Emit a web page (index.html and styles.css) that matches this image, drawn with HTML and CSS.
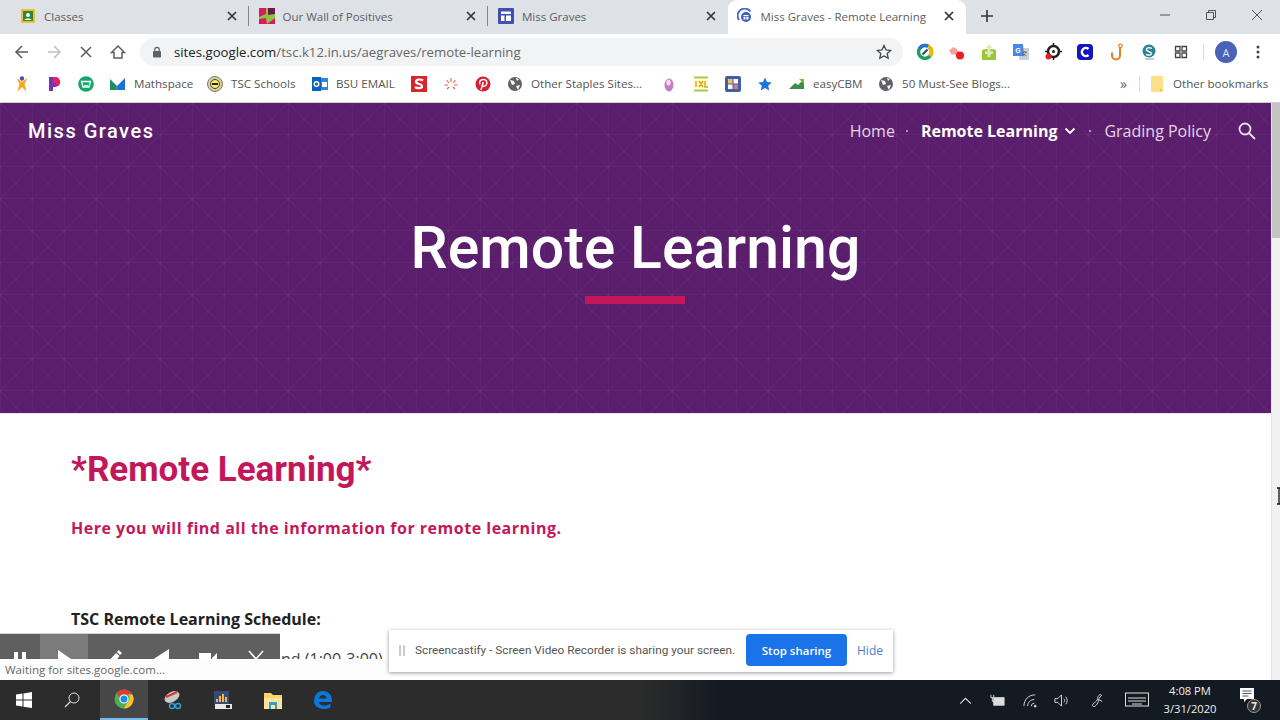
FILE: index.html
```html
<!DOCTYPE html>
<html lang="en">
<head>
    <meta charset="UTF-8">
    <title>Miss Graves - Remote Learning</title>
    <link rel="stylesheet" href="styles.css">
</head>
<body>
    <!-- tab strip -->
    <div class="tabstrip">
        <div class="tab">
            <svg class="favicon" viewBox="0 0 16 16"><rect x="1" y="1" width="14" height="14" rx="1" fill="#f9bb2d"/><rect x="3" y="3" width="10" height="10" fill="#1e8e3e"/><circle cx="8" cy="7" r="2" fill="#fff"/><path d="M4.500 12c.5-2 6.500-2 7 0z" fill="#fff"/></svg>
            <span class="tab-title">Classes</span>
            <svg class="tab-close" viewBox="0 0 10 10"><path d="M1 1l8 8M9 1l-8 8"/></svg>
        </div>
        <div class="tab sep">
            <svg class="favicon" viewBox="0 0 16 16"><rect width="16" height="16" fill="#8cc63f"/><path d="M0 0h7v6l-7 3zM8 16l8-6v6zM0 11l7-1 1 6H0z" fill="#d81b60"/><path d="M9 0h7v6l-7 1z" fill="#6a1b4d"/></svg>
            <span class="tab-title">Our Wall of Positives</span>
            <svg class="tab-close" viewBox="0 0 10 10"><path d="M1 1l8 8M9 1l-8 8"/></svg>
        </div>
        <div class="tab sep">
            <svg class="favicon" viewBox="0 0 16 16"><rect width="16" height="16" rx="1" fill="#3f51b5"/><path d="M3 3.500h10v2.500H3zM3 7.500h3.500V13H3zM8 7.500h5V13H8z" fill="#fff"/></svg>
            <span class="tab-title">Miss Graves</span>
            <svg class="tab-close" viewBox="0 0 10 10"><path d="M1 1l8 8M9 1l-8 8"/></svg>
        </div>
        <div class="tab active">
            <svg class="favicon" viewBox="0 0 16 16"><path d="M13.500 3.500A7 7 0 0 0 2 12" fill="none" stroke="#4a6fc4" stroke-width="2"/><circle cx="9" cy="9" r="5" fill="#3f5fb5"/><path d="M6.500 7h5v1.200h-5zM6.500 9h2v2.500h-2zM9.300 9h2.200v2.500H9.300z" fill="#fff"/></svg>
            <span class="tab-title">Miss Graves - Remote Learning</span>
            <svg class="tab-close" viewBox="0 0 10 10"><path d="M1 1l8 8M9 1l-8 8"/></svg>
        </div>
        <svg class="new-tab" viewBox="0 0 12 12"><path d="M6 0v12M0 6h12"/></svg>
        <div class="window-controls">
            <svg viewBox="0 0 12 12"><path d="M1 6h10"/></svg>
            <svg viewBox="0 0 12 12"><path d="M1.500 3.500h7v7h-7zM3.500 3.500v-2h7v7h-2"/></svg>
            <svg viewBox="0 0 12 12"><path d="M1 1l10 10M11 1L1 11"/></svg>
        </div>
    </div>

    <!-- address bar -->
    <div class="toolbar">
        <div class="nav-buttons">
            <svg viewBox="0 0 16 16"><path d="M14 8H2.500M8 2L2 8l6 6"/></svg>
            <svg class="disabled" viewBox="0 0 16 16"><path d="M2 8h11.500M8 2l6 6-6 6"/></svg>
            <svg viewBox="0 0 16 16"><path d="M3 3l10 10M13 3L3 13"/></svg>
            <svg viewBox="0 0 16 16"><path d="M8 2L1.500 8.500H4V14h8V8.500h2.500z"/></svg>
        </div>
        <div class="omnibox">
            <svg class="lock" viewBox="0 0 10 12"><rect x="1" y="5" width="8" height="6.500" rx="1" fill="#5f6368"/><path d="M2.800 5V3.500a2.200 2.200 0 0 1 4.400 0V5" fill="none" stroke="#5f6368" stroke-width="1.200"/></svg>
            <span class="url"><b>sites.google.com</b>/tsc.k12.in.us/aegraves/remote-learning</span>
            <svg class="star" viewBox="0 0 16 16"><path d="M8 1.500l2 4.400 4.700.5-3.500 3.200 1 4.700L8 11.900l-4.200 2.400 1-4.700L1.300 6.400 6 5.900z"/></svg>
        </div>
        <div class="extensions">
            <svg viewBox="0 0 18 18"><circle cx="9" cy="9" r="6.500" fill="#fff" stroke="#1aa260" stroke-width="3.500"/><path d="M3.400 5.700A6.500 6.500 0 0 1 12 3.200" fill="none" stroke="#2a6fd6" stroke-width="3.500"/><path d="M12 3.200A6.500 6.500 0 0 1 14 13.200" fill="none" stroke="#f4b400" stroke-width="3.500"/><path d="M6.500 11.500L11.500 6.500" stroke="#174a7c" stroke-width="2"/></svg>
            <svg viewBox="0 0 18 18"><path d="M1 7.500L5.500 4l2.500 1.500 3 3-3 3.500-3-1-1 1z" fill="#f4a0a0"/><circle cx="12" cy="12.500" r="4" fill="#ea1c24"/></svg>
            <svg viewBox="0 0 18 18"><path d="M2 7l4-1h6l4 1v10H2z" fill="#9bc53d"/><path d="M9 1l3.500 4H10.500v3.500H13V11H10.500v3h-3v-3H5V8.500h2.500V5H5.500z" fill="#dcedb5"/></svg>
            <svg viewBox="0 0 18 18"><rect x="7" y="5" width="10" height="12" fill="#c9d1d6"/><path d="M1 1h10l1 12H1z" fill="#4a86e8"/><text class="ext-g" x="3.200" y="9.500">G</text><path d="M10 9h5M12.500 8v1M14 9c-.5 2-2 3.500-3.500 4M11 10c.5 1.500 2 2.500 3.500 3" fill="none" stroke="#666" stroke-width=".8"/></svg>
            <svg viewBox="0 0 18 18"><circle cx="9.500" cy="8.500" r="5.500" fill="#fff" stroke="#222" stroke-width="2.600"/><circle cx="9.500" cy="8.500" r="1.500" fill="#222"/><path d="M9.500 0v3M9.500 14v3M1 8.500h3M15 8.500h3" stroke="#222" stroke-width="1.600"/><circle cx="4.500" cy="13.500" r="3" fill="#e02020"/></svg>
            <svg viewBox="0 0 18 18"><rect x="1" y="1" width="16" height="16" rx="4" fill="#1515c0"/><path d="M12.500 6a4 4 0 1 0 0 6" fill="none" stroke="#fff" stroke-width="2.400"/></svg>
            <svg viewBox="0 0 18 18"><path d="M12 5v7.500a4 4 0 0 1-8 0V9.500" fill="none" stroke="#e67e22" stroke-width="2"/><circle cx="12.500" cy="2.800" r="1.800" fill="none" stroke="#e67e22" stroke-width="1.200"/></svg>
            <svg viewBox="0 0 18 18"><circle cx="9" cy="8" r="6.500" fill="#2f7f96"/><path d="M12 5.500C10 4 6 4.500 6.500 7c.5 2 5 1.500 5 3.500 0 2-3.500 2-5.500.8" fill="none" stroke="#e4f2f5" stroke-width="1.500"/><path d="M5 16h9" stroke="#9ab" stroke-width="1.200"/></svg>
            <svg viewBox="0 0 18 18"><path d="M3.500 3.500h4.500v4.500H3.500zM10 3.500h4.500v4.500H10zM3.500 10h4.500v4.500H3.500zM10 10h4.500v4.500H10z" fill="none" stroke="#444" stroke-width="1.300"/></svg>
        </div>
        <span class="toolbar-divider"></span>
        <span class="avatar">A</span>
        <svg class="menu-dots" viewBox="0 0 4 16"><circle cx="2" cy="3" r="1.500"/><circle cx="2" cy="8" r="1.500"/><circle cx="2" cy="13" r="1.500"/></svg>
    </div>

    <!-- bookmarks -->
    <div class="bookmarks">
        <svg class="bm" viewBox="0 0 16 16"><circle cx="8" cy="2.500" r="2.200" fill="#3b5a9c"/><path d="M2.500 2L8 6l5.500-4-3 6 2 7.500L8 11l-4.500 4.500 2-7.500z" fill="#f5a623"/></svg>
        <svg class="bm" viewBox="0 0 16 16"><path d="M3 1h6a5 5 0 0 1 0 10H7v4H3z" fill="#7b2fb5"/><path d="M7 1h2a5 5 0 0 1 3 9L7 6z" fill="#e91e63"/></svg>
        <svg class="bm" viewBox="0 0 16 16"><circle cx="8" cy="8" r="7.800" fill="#12a86b"/><path d="M3.500 5.500h9l-1.500 5.500H5z" fill="none" stroke="#fff" stroke-width="1.300"/><path d="M6 9c1 1 3 1 4 0" fill="none" stroke="#fff"/></svg>
        <span class="bm-item bm-mathspace"><svg class="bm" viewBox="0 0 16 16"><path d="M0 14V3l7 7-1 4z" fill="#1f8f5a"/><path d="M6 14l1-4 8-8v12z" fill="#1e6fd9"/></svg>Mathspace</span>
        <span class="bm-item bm-tsc"><svg class="bm" viewBox="0 0 16 16"><circle cx="8" cy="8" r="7.500" fill="#d8d48a" stroke="#777"/><circle cx="8" cy="8" r="4.500" fill="#f6ee6a" stroke="#444"/><path d="M5 8h6" stroke="#222" stroke-width="2"/></svg>TSC Schools</span>
        <span class="bm-item bm-bsu"><svg class="bm" viewBox="0 0 16 16"><rect x="6" y="2" width="10" height="12" fill="#2f86d8"/><rect y="1" width="9" height="14" fill="#0b62b8"/><circle cx="4.500" cy="8" r="2.300" fill="none" stroke="#fff" stroke-width="1.400"/><path d="M10 6h5v5h-5z" fill="#fff"/></svg>BSU EMAIL</span>
        <svg class="bm" viewBox="0 0 16 16"><rect width="16" height="16" fill="#d9242b"/><path d="M12 4.500C10 3 5 3 5 5.800c0 2.700 6 1.700 6 4.400 0 2.500-5 2.300-7 .8" fill="none" stroke="#fff" stroke-width="2.200"/></svg>
        <svg class="bm" viewBox="0 0 16 16"><path d="M8 6V2M6 7L3.500 4M10 7l2.500-3M5 9H1.500M11 9h3.500M6 11l-2 2M10 11l2 2" stroke="#e8604c" stroke-width="1.100"/></svg>
        <svg class="bm" viewBox="0 0 16 16"><circle cx="8" cy="8" r="7.500" fill="#d81e34"/><path d="M6 14l2.300-8M5 8.500C3.500 5 6 3.500 8.500 3.500c3 0 4 2.500 3 5-1 2.300-3.500 2.300-4 .7" fill="none" stroke="#fff" stroke-width="1.500"/></svg>
        <span class="bm-item bm-staples"><svg class="bm" viewBox="0 0 16 16"><circle cx="8" cy="8" r="7" fill="#5f6368"/><path d="M3 4l4 1 1 3-3 1zM9 10l4-1-2 5zM9 2l3 1-2 2z" fill="#fff"/></svg>Other Staples Sites...</span>
        <svg class="bm" viewBox="0 0 16 16"><ellipse cx="8" cy="9" rx="4.500" ry="6.500" fill="#c77bc4"/><ellipse cx="7.500" cy="6.500" rx="2.200" ry="3" fill="#f6dcf3"/></svg>
        <svg class="bm" viewBox="0 0 16 16"><path d="M1 1.500h14M1 14.500h14" stroke="#a6ce39" stroke-width="2"/><rect x="1" y="4" width="14" height="8" fill="#fff8d8"/><path d="M3 5v6M6 5l4 6M10 5l-4 6M12 5v6h3" fill="none" stroke="#e0a800" stroke-width="1.400"/></svg>
        <svg class="bm" viewBox="0 0 16 16"><rect width="16" height="16" rx="2" fill="#3f5fa8"/><rect x="3" y="3" width="4.500" height="4.500" fill="#f2c14e"/><rect x="8.500" y="3" width="4.500" height="4.500" fill="#fff"/><rect x="3" y="8.500" width="4.500" height="4.500" fill="#fff"/><rect x="8.500" y="8.500" width="4.500" height="4.500" fill="#e57373"/></svg>
        <svg class="bm" viewBox="0 0 16 16"><path d="M8 1.500l2 4.500 4.800.5-3.600 3.200 1 4.800L8 12l-4.200 2.500 1-4.800L1.200 6.500 6 6z" fill="#1a73e8"/></svg>
        <span class="bm-item bm-easy"><svg class="bm" viewBox="0 0 16 16"><path d="M0 13l6-6 3 2 6-6v10z" fill="#3c8f4a"/><path d="M10 3h5v5z" fill="#7cb342"/></svg>easyCBM</span>
        <span class="bm-item bm-blogs"><svg class="bm" viewBox="0 0 16 16"><circle cx="8" cy="8" r="7" fill="#5f6368"/><path d="M3 4l4 1 1 3-3 1zM9 10l4-1-2 5zM9 2l3 1-2 2z" fill="#fff"/></svg>50 Must-See Blogs...</span>
        <span class="bm-more">»</span>
        <span class="bm-divider"></span>
        <span class="bm-item"><svg class="bm" viewBox="0 0 16 16"><path d="M2 0h12v16H2z" fill="#fbe08a"/><path d="M11 16v-3h3z" fill="#e8c45e"/></svg>Other bookmarks</span>
    </div>

    <!-- site -->
    <div class="viewport">
        <div class="page">
            <header class="hero">
                <div class="site-nav">
                    <span class="site-name">Miss Graves</span>
                    <nav class="site-links">
                        <a>Home</a>
                        <i class="dot"></i>
                        <a class="current">Remote Learning</a>
                        <svg class="chevron" viewBox="0 0 12 8"><path d="M1.500 1.500L6 6l4.500-4.500"/></svg>
                        <i class="dot"></i>
                        <a>Grading Policy</a>
                    </nav>
                    <svg class="site-search" viewBox="0 0 18 18"><circle cx="7" cy="7" r="5.500"/><path d="M11 11l6 6"/></svg>
                </div>
                <h1>Remote Learning</h1>
                <div class="title-rule"></div>
            </header>
            <main class="content">
                <h2>*Remote Learning*</h2>
                <p class="lead">Here you will find all the information for remote learning.</p>
                <p class="schedule-title">TSC Remote Learning Schedule:</p>
                <p class="schedule-row">nd (1:00-3:00)</p>
            </main>
        </div>
        <div class="scrollbar"><div class="thumb"></div></div>

        <!-- things floating over the page -->
        <div class="recorder">
            <span class="rec-btn"><svg viewBox="0 0 20 20"><path d="M4 3h4v14H4zM12 3h4v14h-4z"/></svg></span>
            <span class="rec-btn on"><svg viewBox="0 0 20 20"><path d="M4 1l13 9-13 9z"/></svg></span>
            <span class="rec-btn"><svg viewBox="0 0 20 20"><path d="M5 14L14 4l3.500 3L9 18zM15 3l1.500-2 3.500 3-2 2z"/></svg></span>
            <span class="rec-btn"><svg viewBox="0 0 20 20"><path d="M-4 15L19 0v20H-4z"/></svg></span>
            <span class="rec-btn"><svg viewBox="0 0 20 20"><path d="M1 4h12v14H1zM14 9l5-5v14l-5-4z"/></svg></span>
            <span class="rec-btn"><svg class="rec-x" viewBox="0 0 20 20"><path d="M3 2l14 16M17 2L3 18"/></svg></span>
        </div>
        <div class="status-bubble">Waiting for sites.google.com...</div>
        <div class="share-bar">
            <span class="grip"></span>
            <span class="share-text">Screencastify - Screen Video Recorder is sharing your screen.</span>
            <button class="stop-btn">Stop sharing</button>
            <span class="hide-link">Hide</span>
        </div>
        <svg class="cursor" viewBox="0 0 6 18"><path d="M1 1h4M3 1v16M1 17h4"/></svg>
    </div>

    <!-- windows taskbar -->
    <footer class="taskbar">
        <span class="task"><svg viewBox="0 0 16 16"><path d="M0 2.500l6.500-.9v6H0zM7.500 1.400L16 0v7.600H7.500zM0 8.500h6.500v6L0 13.600zM7.500 8.500H16V16l-8.500-1.300z" fill="#fff"/></svg></span>
        <span class="task"><svg viewBox="0 0 16 16"><circle cx="10" cy="6" r="5" fill="none" stroke="#ddd"/><path d="M6.500 9.500L1 15" stroke="#ddd" stroke-width="1.300"/></svg></span>
        <span class="task running"><svg class="large" viewBox="0 0 20 20"><circle cx="10" cy="10" r="9.500" fill="#4caf50"/><path d="M10 .5a9.500 9.500 0 0 1 8.200 4.700H10a5 5 0 0 0-4.600 3L2.600 4A9.500 9.500 0 0 1 10 .5z" fill="#e53935"/><path d="M18.400 5.500a9.500 9.500 0 0 1-8.700 14l4.500-7a5 5 0 0 0 0-7z" fill="#fbc02d"/><circle cx="10" cy="10" r="4.600" fill="#fff"/><circle cx="10" cy="10" r="3.500" fill="#1e88e5"/></svg></span>
        <span class="task"><svg class="large" viewBox="0 0 20 20"><ellipse cx="9" cy="7" rx="8" ry="5" fill="#c9c9c9" transform="rotate(-30 9 7)"/><path d="M3 7l11-5" stroke="#d9342b" stroke-width="2"/><circle cx="9" cy="16" r="2.500" fill="none" stroke="#2b9fd6" stroke-width="1.500"/><circle cx="15" cy="16" r="2.500" fill="none" stroke="#2b9fd6" stroke-width="1.500"/></svg></span>
        <span class="task"><svg class="large" viewBox="0 0 20 20"><rect x="1" y="1" width="15" height="13" fill="#3a4a78"/><path d="M3 12V9h2v3zM6 12V6h2v6zM9 12V4h2v8zM12 12V7h2v5z" fill="#f4b942"/><rect x="2" y="14" width="17" height="5" fill="#e8e8e8"/><rect x="13" y="15" width="4" height="3" fill="#222"/></svg></span>
        <span class="task"><svg class="large" viewBox="0 0 20 20"><path d="M1 3h7l2 2h9v14H1z" fill="#f8d66d"/><path d="M1 8h18v11H1z" fill="#fce59a"/><path d="M6 12h8v7h-2v-4H8v4H6z" fill="#2a9fd6"/></svg></span>
        <span class="task"><svg class="large" viewBox="0 0 20 20"><path d="M10 1C4 1 1 6 1 11c0 6 6 8 10 8 2 0 5-.6 6.500-1.500v-4C15 15 13 15.500 11 15.500c-3 0-5-1.500-5-3.500h13c.6-6-3-11-9-11zM6 8.500C6.500 6.500 8 5 10 5s3.500 1.500 3.500 3.500z" fill="#0b78d7"/></svg></span>
        <div class="tray">
            <svg class="tray-icon" viewBox="0 0 14 14"><path d="M2 10l5-5 5 5"/></svg>
            <svg class="tray-icon tray-power" viewBox="0 0 16 14"><rect x="4" y="4" width="11" height="8" fill="#ddd"/><path d="M1 1v3h3V1M2.500 4v4H5"/></svg>
            <svg class="tray-icon tray-wifi" viewBox="0 0 16 16"><path d="M1 14C1 7 6 2 13 2M5 14c0-4 3-7 7-7M9 14c0-2 1-3 3-3"/><circle cx="13" cy="14" r="1" fill="#ddd"/></svg>
            <svg class="tray-icon tray-sound" viewBox="0 0 16 16"><path d="M1 6h3l4-4v12l-4-4H1zM10.500 6c1 1 1 3 0 4M12.500 4c2 2 2 6 0 8"/></svg>
            <svg class="tray-icon tray-pen" viewBox="0 0 16 16"><path d="M3 14c-2-3 5-4 5-8 0-3 3-5 4-4 1 1-3 3-3 6 0 3-4 8-6 6zM9 7l4 2"/></svg>
            <svg class="tray-icon tray-kbd" viewBox="0 0 24 16"><rect x=".5" y="1" width="23" height="13"/><path d="M3 6h18M3 9h18M7 12h10"/></svg>
            <div class="clock"><span>4:08 PM</span><span>3/31/2020</span></div>
            <div class="notif">
                <svg viewBox="0 0 16 16"><path d="M1 1h14v11H8l-3 3v-3H1z" fill="#fff"/><path d="M3.500 4h9M3.500 6.500h9M3.500 9h6" stroke="#555"/></svg>
                <span class="notif-count">7</span>
            </div>
        </div>
    </footer>
</body>
</html>
```

FILE: styles.css
```css
* {
    margin: 0;
    padding: 0;
    box-sizing: border-box;
}

body {
    width: 1280px;
    height: 720px;
    overflow: hidden;
    display: flex;
    flex-direction: column;
    background: #fff;
    font-family: "Open Sans", sans-serif;
    color: #333;
}

svg {
    display: block;
    flex-shrink: 0;
}

/* Tab strip */
.tabstrip {
    height: 34px;
    background: #dee1e6;
    display: flex;
    align-items: stretch;
    padding-left: 8px;
}

.tab {
    width: 239.500px;
    display: flex;
    align-items: center;
    padding: 0 11px 2px 12px;
    position: relative;
}

.tab.sep {
    padding-left: 11px;
}

.tab.sep::before {
    content: "";
    position: absolute;
    left: 0;
    top: 6px;
    bottom: 8px;
    width: 1px;
    background: #84878c;
}

.tab.active {
    background: #fff;
    border-radius: 9px 9px 0 0;
    margin-left: 1px;
    width: 238px;
    padding-left: 9px;
    padding-right: 12px;
}

.favicon {
    width: 16px;
    height: 16px;
    margin-right: 8px;
}

.tab-title {
    flex: 1;
    font-size: 11.500px;
    color: #5b5e63;
    white-space: nowrap;
    overflow: hidden;
}

.tab-close {
    width: 10px;
    height: 10px;
    fill: none;
    stroke: #333;
    stroke-width: 1.700;
}

.new-tab {
    width: 12px;
    height: 12px;
    margin: 10px 0 0 15px;
    fill: none;
    stroke: #333;
    stroke-width: 1.600;
}

.window-controls {
    margin-left: auto;
    display: flex;
}

.window-controls svg {
    width: 46px;
    height: 12px;
    margin-top: 9px;
    fill: none;
    stroke: #444;
    stroke-width: 0.900;
}

/* Address bar */
.toolbar {
    height: 34px;
    padding-top: 2px;
    display: flex;
    align-items: center;
    background: #fff;
}

.nav-buttons {
    display: flex;
    gap: 16px;
    padding-left: 14px;
    width: 140px;
}

.nav-buttons svg {
    width: 16px;
    height: 16px;
    fill: none;
    stroke: #5a5d61;
    stroke-width: 1.500;
}

.nav-buttons .disabled {
    stroke: #bdc1c6;
}

.omnibox {
    width: 763px;
    height: 28px;
    background: #f1f3f4;
    border-radius: 14px;
    display: flex;
    align-items: center;
    padding: 0 11px 0 12px;
}

.lock {
    width: 10px;
    height: 12px;
    margin-right: 12px;
}

.url {
    flex: 1;
    font-size: 13.200px;
    color: #666;
    white-space: nowrap;
}

.url b {
    font-weight: 400;
    color: #222;
}

.star {
    width: 16px;
    height: 16px;
    fill: none;
    stroke: #444;
    stroke-width: 1.300;
}

.extensions {
    display: flex;
    gap: 14px;
    padding-left: 13px;
}

.extensions svg {
    width: 18px;
    height: 18px;
}

.ext-g {
    font-family: "Liberation Sans", sans-serif;
    font-size: 7px;
    font-weight: 700;
    fill: #fff;
}

.toolbar-divider {
    width: 1px;
    height: 16px;
    background: #dadce0;
    margin-left: 13px;
}

.avatar {
    width: 22px;
    height: 22px;
    margin-left: 11px;
    border-radius: 50%;
    background: #4a62b8;
    color: #dfe5f7;
    font-size: 11px;
    display: flex;
    align-items: center;
    justify-content: center;
}

.menu-dots {
    width: 4px;
    height: 16px;
    margin-left: 19px;
    fill: #444;
}

/* Bookmarks */
.bookmarks {
    height: 35px;
    display: flex;
    align-items: center;
    padding: 0 0 3px 14px;
    background: #fff;
    border-bottom: 1px solid #d3cfd6;
    font-size: 11.600px;
    color: #555;
    white-space: nowrap;
}

.bm {
    width: 16px;
    height: 16px;
    margin-right: 16px;
}

.bm-item {
    display: flex;
    align-items: center;
}

.bm-item .bm {
    margin-right: 8px;
}

.bm-mathspace {
    width: 97px;
}

.bm-tsc {
    width: 105px;
}

.bm-bsu {
    width: 99px;
}

.bm-staples {
    width: 154px;
}

.bm-easy {
    width: 89px;
}

.bm-blogs {
    width: 242px;
}

.bm-more {
    width: 19px;
    font-size: 14px;
    color: #666;
}

.bm-divider {
    width: 1px;
    height: 16px;
    background: #e0e0e0;
    margin-right: 9px;
}

/* Site */
.viewport {
    flex: 1;
    min-height: 0;
    display: flex;
    position: relative;
    overflow: hidden;
}

.page {
    width: 1271px;
    overflow: hidden;
}

.hero {
    height: 310px;
    background-color: #5b1e6d;
    background-image:
        linear-gradient(45deg, transparent 49%, rgba(255, 255, 255, 0.03) 49% 51%, transparent 51%),
        linear-gradient(-45deg, transparent 49%, rgba(255, 255, 255, 0.03) 49% 51%, transparent 51%),
        linear-gradient(90deg, rgba(255, 255, 255, 0.03) 1px, transparent 1px),
        linear-gradient(0deg, rgba(255, 255, 255, 0.03) 1px, transparent 1px),
        linear-gradient(45deg, transparent 49.500%, rgba(255, 255, 255, 0.025) 49.500% 50.500%, transparent 50.500%),
        linear-gradient(-45deg, transparent 49.500%, rgba(255, 255, 255, 0.025) 49.500% 50.500%, transparent 50.500%);
    background-size: 32px 32px, 32px 32px, 32px 32px, 32px 32px, 96px 96px, 96px 96px;
    display: flex;
    flex-direction: column;
    align-items: center;
    color: #fff;
}

.site-nav {
    width: 100%;
    height: 56px;
    display: flex;
    align-items: center;
    padding: 0 15px 0 28px;
}

.site-name {
    font-family: Roboto, sans-serif;
    font-weight: 500;
    font-size: 20px;
    letter-spacing: 1.500px;
}

.site-links {
    margin-left: auto;
    display: flex;
    align-items: center;
    font-size: 16px;
    color: #e4d6e8;
}

.site-links .current {
    font-weight: 700;
    color: #fff;
}

.dot {
    width: 2px;
    height: 2px;
    border-radius: 50%;
    background: #c9b4d0;
    margin: 0 13px 0 11px;
}

.chevron {
    width: 12px;
    height: 8px;
    margin-left: 7px;
    margin-right: 2px;
    fill: none;
    stroke: #fff;
    stroke-width: 1.800;
}

.site-search {
    width: 18px;
    height: 18px;
    margin-left: 27px;
    fill: none;
    stroke: #e9e0ec;
    stroke-width: 1.800;
}

.hero h1 {
    margin-top: 54px;
    font-family: Roboto, sans-serif;
    font-weight: 500;
    font-size: 59px;
    line-height: 70px;
}

.title-rule {
    width: 100px;
    height: 8px;
    margin: 13px 2px 0 0;
    background: #c2185b;
}

.content {
    padding: 36px 0 0 71px;
    border-top: 1px solid #eee4f0;
    color: #212121;
}

.content h2 {
    font-family: Roboto, sans-serif;
    font-weight: 700;
    font-size: 35px;
    line-height: 40px;
    color: #c2185b;
}

.lead {
    margin-top: 27px;
    font-size: 16px;
    line-height: 22px;
    font-weight: 700;
    letter-spacing: 0.500px;
    color: #c2185b;
}

.schedule-title {
    margin-top: 69px;
    font-size: 16px;
    line-height: 22px;
    font-weight: 700;
}

.schedule-row {
    margin-top: 18px;
    padding-left: 210px;
    font-size: 16px;
    line-height: 22px;
    color: #444;
}

.scrollbar {
    width: 9px;
    background: #f1f1f1;
    border-left: 1px solid #e4e4e4;
}

.thumb {
    height: 135px;
    background: #c4c4c4;
}

/* Over the page */
.recorder {
    position: absolute;
    left: 0;
    top: 530px;
    width: 280px;
    height: 29px;
    background: #5f5f5f;
    border-top: 1px solid #d0d0d0;
    display: flex;
    overflow: hidden;
}

.rec-btn {
    width: 48px;
    height: 40px;
    padding-top: 15px;
    display: flex;
    justify-content: center;
}

.rec-btn:first-child {
    width: 40px;
}

.rec-btn.on {
    background: #7b7b7b;
}

.rec-btn svg {
    width: 20px;
    height: 20px;
    fill: #fff;
    overflow: visible;
}

.rec-btn .rec-x {
    fill: none;
    stroke: #fff;
    stroke-width: 1.500;
}

.status-bubble {
    position: absolute;
    left: 0;
    bottom: 0;
    width: 388px;
    height: 21px;
    background: #fdfdfd;
    padding-left: 5px;
    font-size: 11.500px;
    line-height: 21px;
    color: #666;
}

.share-bar {
    position: absolute;
    left: 389px;
    top: 527px;
    width: 504px;
    height: 42px;
    background: #fff;
    box-shadow: 0 1px 4px rgba(0, 0, 0, 0.4);
    display: flex;
    align-items: center;
    padding: 0 0 2px 10px;
    font-family: Roboto, sans-serif;
    font-size: 11.800px;
    color: #555;
}

.grip {
    width: 6px;
    height: 11px;
    border-left: 2px solid #ccc;
    border-right: 2px solid #ccc;
    margin-right: 10px;
}

.share-text {
    width: 331px;
    white-space: nowrap;
}

.stop-btn {
    width: 101px;
    height: 32px;
    border: none;
    border-radius: 4px;
    background: #1a73e8;
    color: #fff;
    font-family: "Open Sans", sans-serif;
    font-size: 11.500px;
    font-weight: 600;
}

.hide-link {
    margin-left: 10px;
    font-family: "Open Sans", sans-serif;
    font-size: 12px;
    color: #4a7fd0;
}

.cursor {
    position: absolute;
    left: 1276px;
    top: 384px;
    width: 6px;
    height: 18px;
    fill: none;
    stroke: #111;
    stroke-width: 1.300;
}

/* Windows taskbar */
.taskbar {
    height: 40px;
    display: flex;
    align-items: center;
    background: linear-gradient(90deg, #2c2c2c 0, #2c2c2c 640px, #141a22 720px);
    color: #eee;
}

.task {
    width: 50px;
    height: 40px;
    display: flex;
    align-items: center;
    justify-content: center;
}

.task:first-child {
    width: 47px;
}

.task svg {
    width: 16px;
    height: 16px;
}

.task .large {
    width: 20px;
    height: 20px;
}

.task.running {
    width: 48px;
    background: #474747;
    border-bottom: 2px solid #76b9ed;
    margin-left: 3px;
}

.tray {
    margin-left: auto;
    display: flex;
    align-items: center;
}

.tray-icon {
    width: 15px;
    height: 15px;
    margin-right: 17px;
    fill: none;
    stroke: #ddd;
    stroke-width: 1;
}

.tray-power {
    margin-right: 18px;
}

.tray-wifi {
    margin-right: 16px;
}

.tray-sound {
    margin-right: 21px;
}

.tray-pen {
    margin-right: 20px;
}

.tray-kbd {
    width: 24px;
    height: 16px;
    margin-right: 9px;
}

.clock {
    width: 64px;
    display: flex;
    flex-direction: column;
    align-items: center;
    gap: 2px;
    font-size: 11.200px;
    line-height: 16px;
}

.notif {
    width: 34px;
    height: 26px;
    margin: 0 16px 0 8px;
    position: relative;
    display: flex;
    justify-content: center;
}

.notif svg {
    width: 16px;
    height: 16px;
}

.notif-count {
    position: absolute;
    right: 3px;
    bottom: 0;
    width: 14px;
    height: 14px;
    border-radius: 50%;
    background: #333;
    border: 1px solid #999;
    font-size: 10px;
    font-weight: 700;
    line-height: 12px;
    text-align: center;
}
```
